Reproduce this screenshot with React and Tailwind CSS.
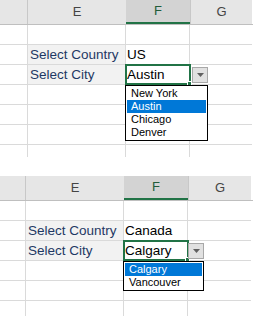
import React from "react";

const GRID = "border-[#dadada]";

function Panel({ cols, country, city, items, selected, gx, listW, arrowX, nRows, tail }) {
  const [rh, e, f, g] = cols;
  const rows = [
    { label: "", value: "" },
    { label: "Select Country", value: country, fill: true },
    { label: "Select City", value: city, fill: true },
  ];
  while (rows.length < nRows) rows.push({ label: "", value: "" });
  return (
    <div className="relative w-[253px]">
      {/* header */}
      <div className="flex h-[25px] border-b border-[#bfbfbf] text-[13px] text-[#444]">
        <div className={`${rh} bg-[#e6e6e6] border-r border-[#c8c8c8]`} />
        <div className={`${e} bg-[#e6e6e6] flex items-center justify-center`}>E</div>
        <div className={`${f} bg-[#d3d3d3] border-b-2 border-[#217346] flex items-center justify-center text-[#215c3a]`}>F</div>
        <div className={`${g} bg-[#e6e6e6] border-l border-[#c8c8c8] flex items-center justify-center`}>G</div>
      </div>
      {rows.map((r, i) => (
        <div key={i} className="flex h-[20px] text-[13.5px] leading-none">
          <div className={`${rh} border-r border-b ${GRID}`} />
          <div className={`${e} border-r border-b ${GRID} ${r.fill ? "bg-[#f2f2f2]" : ""} flex items-end pl-[2px] pb-[3px] text-[#1f3864]`}>{r.label}</div>
          <div className={`${f} border-r border-b ${GRID} flex items-end pl-[1px] pb-[3px] text-black`}>{r.value}</div>
          <div className={`${g} border-b ${GRID}`} />
        </div>
      ))}
      <div className={`flex ${tail}`}>
        <div className={`${rh} border-r ${GRID}`} />
        <div className={`${e} border-r ${GRID}`} />
        <div className={`${f} border-r ${GRID}`} />
        <div className={`${g}`} />
      </div>

      {/* active cell */}
      <div className={`absolute top-[64px] ${gx} w-[66px] h-[21px] border-2 border-[#217346]`} />
      <div className={`absolute top-[81px] ${arrowX === "a" ? "left-[187px]" : "left-[185px]"} w-[5px] h-[5px] bg-[#217346] border border-white`} />
      {/* arrow button */}
      <div className={`absolute top-[67px] ${arrowX === "a" ? "left-[192px]" : "left-[188px]"} w-[16px] h-[16px] bg-[#e1e1e1] border border-[#a8a8a8] flex items-center justify-center`}>
        <svg width="7" height="4" viewBox="0 0 7 4"><path d="M0 0h7L3.5 4z" fill="#606060" /></svg>
      </div>
      {/* list */}
      <div className={`absolute top-[85px] ${gx} ${listW} bg-white border border-black p-[1px] text-[11px] leading-[13px]`}>
        {items.map((it) => (
          <div key={it} className={`h-[13px] pl-[4px] ${it === selected ? "bg-[#0078d7] text-white" : "text-black"}`}>{it}</div>
        ))}
      </div>
    </div>
  );
}

export default function App() {
  return (
    <div className="w-[253px] h-[328px] bg-white overflow-hidden font-['Liberation_Sans',Arial,sans-serif]">
      <Panel
        cols={["w-[28px]", "w-[98px]", "w-[64px]", "w-[62px]"]}
        country="US"
        city="Austin"
        items={["New York", "Austin", "Chicago", "Denver"]}
        selected="Austin"
        gx="left-[125px]"
        listW="w-[83px]"
        arrowX="a"
        nRows={6}
        tail="h-[12px]"
      />
      <div className="h-[19px]" />
      <Panel
        cols={["w-[26px]", "w-[98px]", "w-[64px]", "w-[63px]"]}
        country="Canada"
        city="Calgary"
        items={["Calgary", "Vancouver"]}
        selected="Calgary"
        gx="left-[123px]"
        listW="w-[81px]"
        arrowX="b"
        nRows={5}
        tail="h-[15px]"
      />
    </div>
  );
}
